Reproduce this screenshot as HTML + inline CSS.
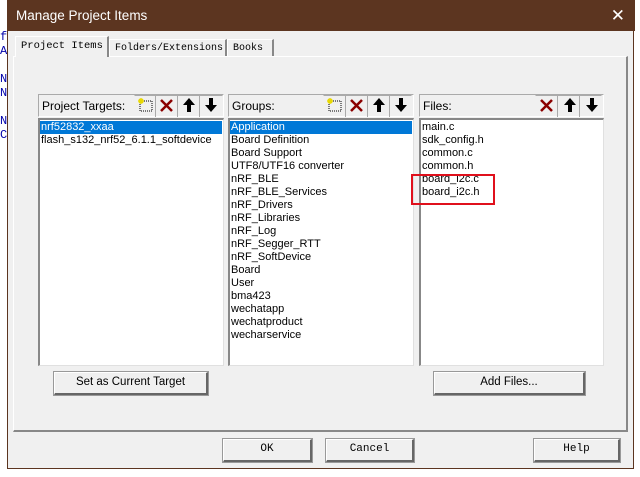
<!DOCTYPE html><html><head><style>
body{margin:0;width:640px;height:477px;background:#fff;position:relative;overflow:hidden;font-family:"Liberation Sans",sans-serif;}
.a{position:absolute;box-sizing:border-box}
.dlg{left:7px;top:0;width:627px;height:469px;background:#f0f0f0;border:1px solid #5c3520;border-top:none}
.tb{left:0;top:0;width:627px;height:31px;background:#5c3520;color:#fff;font-size:13.5px;line-height:31px;padding-left:8px}
.tab{font-family:"Liberation Mono",monospace;font-size:10px;line-height:18px;background:#f0f0f0;border:1px solid #fff;border-right:2px solid #888;border-bottom:none;padding-left:5px;white-space:nowrap;overflow:hidden}
.panel{left:5px;top:56px;width:615px;height:376px;border:1px solid #fff;border-right:2px solid #888;border-bottom:2px solid #888}
.hdr{border:1px solid #aaa;border-right-color:#fff;border-bottom-color:#fff;height:23px;font-size:12px;line-height:22px;padding-left:3px;color:#000}
.list{background:#fff;border:2px solid #888;border-right:1px solid #e0e0e0;border-bottom:1px solid #e0e0e0;font-size:11px;line-height:13px;padding-top:1px}
.list div{padding-left:1px;height:13px;white-space:nowrap}
.sel{background:#0078d7;color:#fff;margin-right:1px}
.btn{border:1px solid #fff;border-right:2px solid #666;border-bottom:2px solid #666;background:#f0f0f0;text-align:center;font-size:11.5px;line-height:19px;outline:1px solid #999;}
.mb{font-family:"Liberation Mono",monospace;font-size:11px}
</style></head><body>
<div class="a" style="left:0;top:30px;font:12px 'Liberation Mono',monospace;line-height:14px;color:#00a">f<br>A<br><br>N<br>N<br><br>N<br>C</div>
<div class="a dlg">
<div class="a tb">Manage Project Items<span style="position:absolute;right:10px;top:0;font-size:17px">✕</span></div>
<div class="a panel"></div>
<div class="a tab" style="left:7px;top:36px;width:94px;height:21px;z-index:2;border-bottom:none;font-size:10.5px">Project Items</div>
<div class="a tab" style="left:101px;top:39px;width:118px;height:17px;line-height:17px">Folders/Extensions</div>
<div class="a tab" style="left:219px;top:39px;width:47px;height:17px;line-height:17px">Books</div>

<div class="a hdr" style="left:30px;top:94px;width:186px">Project Targets:</div>
<div class="a list" style="left:30px;top:118px;width:186px;height:248px"><div class="sel">nrf52832_xxaa</div><div>flash_s132_nrf52_6.1.1_softdevice</div></div>

<div class="a hdr" style="left:220px;top:94px;width:186px">Groups:</div>
<div class="a list" style="left:220px;top:118px;width:186px;height:248px"><div class="sel">Application</div><div>Board Definition</div><div>Board Support</div><div>UTF8/UTF16 converter</div><div>nRF_BLE</div><div>nRF_BLE_Services</div><div>nRF_Drivers</div><div>nRF_Libraries</div><div>nRF_Log</div><div>nRF_Segger_RTT</div><div>nRF_SoftDevice</div><div>Board</div><div>User</div><div>bma423</div><div>wechatapp</div><div>wechatproduct</div><div>wecharservice</div></div>

<div class="a hdr" style="left:411px;top:94px;width:185px">Files:</div>
<div class="a list" style="left:411px;top:118px;width:185px;height:248px"><div>main.c</div><div>sdk_config.h</div><div>common.c</div><div>common.h</div><div>board_i2c.c</div><div>board_i2c.h</div></div>
<div class="a" style="left:403px;top:174px;width:84px;height:31px;border:2px solid #e0101c"></div>

<div class="a btn" style="left:46px;top:372px;width:154px;height:23px">Set as Current Target</div>
<div class="a btn" style="left:426px;top:372px;width:151px;height:23px">Add Files...</div>
<div class="a btn mb" style="left:215px;top:439px;width:89px;height:23px">OK</div>
<div class="a btn mb" style="left:318px;top:439px;width:88px;height:23px">Cancel</div>
<div class="a btn mb" style="left:526px;top:439px;width:86px;height:23px">Help</div>
</div>

<svg class="a" style="left:0;top:0" width="640" height="477">
<defs>
<g id="nw"><rect x="5" y="6" width="12" height="10" fill="none" stroke="#000" stroke-dasharray="1,1"/><path d="M4 4 l4 4 M8 4 l-4 4 M6 3v6 M3 6h6" stroke="#e8d800" stroke-width="1.5"/></g>
<g id="dl"><path d="M5 5 L16 16 M16 5 L5 16" stroke="#8b0000" stroke-width="2.5"/></g>
<g id="up"><path d="M11 3 L5 10 H9 V17 H13 V10 H17 Z" fill="#000"/></g>
<g id="dn"><path d="M11 17 L5 10 H9 V3 H13 V10 H17 Z" fill="#000"/></g>
</defs>
<g transform="translate(135,95)"><use href="#nw"/></g>
<g transform="translate(156,95)"><use href="#dl"/></g>
<g transform="translate(178,95)"><use href="#up"/></g>
<g transform="translate(200,95)"><use href="#dn"/></g>
<g transform="translate(324,95)"><use href="#nw"/></g>
<g transform="translate(346,95)"><use href="#dl"/></g>
<g transform="translate(368,95)"><use href="#up"/></g>
<g transform="translate(390,95)"><use href="#dn"/></g>
<g transform="translate(536,95)"><use href="#dl"/></g>
<g transform="translate(559,95)"><use href="#up"/></g>
<g transform="translate(581,95)"><use href="#dn"/></g>
<g fill="none" stroke="#aaa">
<path d="M134.5 95.5h88M155.5 95v22M177.5 95v22M199.5 95v22"/>
<path d="M323.5 95.5h88M345.5 95v22M367.5 95v22M389.5 95v22"/>
<path d="M535.5 95.5h66M557.5 95v22M579.5 95v22"/>
</g>
</svg>
</body></html>
